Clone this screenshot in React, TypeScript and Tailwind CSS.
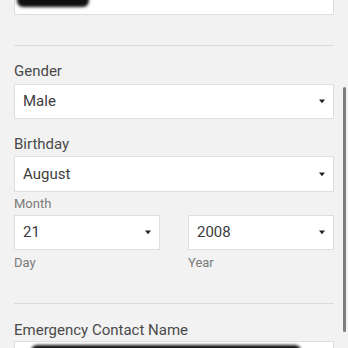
import React from 'react';

function Arrow() {
  return (
    <svg width="8" height="5" viewBox="0 0 8 5" className="shrink-0">
      <path d="M1 0.5h6L4 4.2z" fill="#222" />
    </svg>
  );
}

function Select({ value, className = '' }: { value: string; className?: string }) {
  return (
    <div className={`h-[35px] bg-white border border-[#dedede] flex items-center justify-between pl-[8px] pr-[7px] ${className}`}>
      <span className="text-[15px] text-[#3d3d3d]">{value}</span>
      <Arrow />
    </div>
  );
}

export default function App() {
  return (
    <div
      className="relative w-[348px] h-[348px] overflow-hidden bg-[#f2f2f2]"
      style={{ fontFamily: 'Roboto, "Liberation Sans", sans-serif' }}
    >
      <div className="px-[14px]">
        {/* name field (cut off at top) */}
        <div className="-mt-[20px] h-[35px] bg-white border border-[#dedede] relative">
          <div className="absolute left-[2px] top-[12px] w-[72px] h-[14px] rounded-[6px] bg-[#111] blur-[1.5px]" />
        </div>

        <div className="mt-[30px] h-px bg-[#dcdcdc]" />

        <div className="mt-[16px] text-[15px] leading-[18px] text-[#4a4a4a]">Gender</div>
        <Select value="Male" className="mt-[4px] h-[34px]" />

        <div className="mt-[16px] text-[15px] leading-[18px] text-[#4a4a4a]">Birthday</div>
        <Select value="August" className="mt-[3px] h-[36px]" />
        <div className="mt-[4px] text-[13px] leading-[16px] text-[#7a7a7a]">Month</div>

        <div className="mt-[3px] flex gap-[28px]">
          <div className="flex-1">
            <Select value="21" />
            <div className="mt-[5px] text-[13px] leading-[16px] text-[#7a7a7a]">Day</div>
          </div>
          <div className="flex-1">
            <Select value="2008" />
            <div className="mt-[5px] text-[13px] leading-[16px] text-[#7a7a7a]">Year</div>
          </div>
        </div>

        <div className="mt-[32px] h-px bg-[#dcdcdc]" />

        <div className="mt-[17px] text-[15px] leading-[18px] text-[#4a4a4a]">Emergency Contact Name</div>
        <div className="mt-[2px] h-[35px] bg-white border border-[#dedede] relative">
          <div className="absolute left-[16px] top-[3px] w-[270px] h-[16px] rounded-[6px] bg-[#111] blur-[1.5px]" />
        </div>
      </div>

      {/* scrollbar */}
      <div className="absolute left-[343px] top-[87px] w-[3px] h-[245px] bg-[#7d7d7d] rounded-full" />
    </div>
  );
}
